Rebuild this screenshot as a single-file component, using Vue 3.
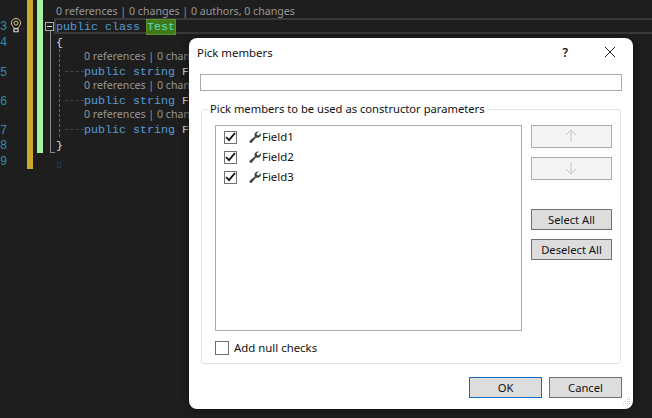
<script setup>
const fields = ['Field1', 'Field2', 'Field3']
const wrench = 'M9 .5C7 .5 5.500 2 5.500 4c0 .5.1 1 .3 1.400L.9 9.500c-.6.6-.6 1.500 0 2 .6.6 1.500.6 2 0L7 6.500c.5.2 1 .3 1.500.3 2 0 3.500-1.500 3.500-3.500 0-.4-.1-.8-.2-1.100L9.500 4.500 8 4 7.500 2.500 9.800.7C9.500.6 9.300.5 9 .5z'
</script>

<template>
  <div class="screen">
    <div class="editor">
      <div class="numbers">
        <span class="n lens"></span>
        <span class="n">3</span>
        <span class="n">4</span>
        <span class="n lens"></span>
        <span class="n short">5</span>
        <span class="n lens"></span>
        <span class="n short">6</span>
        <span class="n lens"></span>
        <span class="n short">7</span>
        <span class="n">8</span>
        <span class="n">9</span>
      </div>
      <div class="bars">
        <div class="bar yellow"></div>
        <div class="bar green"></div>
      </div>
      <div class="code">
        <div class="lens">0 references | 0 changes | 0 authors, 0 changes</div>
        <div class="line current">
          <span class="kw">public class </span><span class="type">Test</span>
        </div>
        <div class="line"><span class="brace">{</span></div>
        <template v-for="f in 3" :key="f">
          <div class="lens inner">0 references | 0 changes</div>
          <div class="line inner"><span class="dots"></span><span class="kw">public string </span><span class="plain">Field</span></div>
        </template>
        <div class="line"><span class="brace">}</span></div>
        <div class="line"><span class="cursor"></span></div>
      </div>
    </div>

    <svg class="bulb" width="12" height="15" viewBox="0 0 14 18" fill="none" stroke="#d8c48a" stroke-width="1.200">
      <path d="M4.500 12.500C4.500 10.500 1.500 9.500 1.500 6a5.500 5.500 0 0 1 11 0c0 3.500-3 4.500-3 6.500z" />
      <circle cx="7" cy="6" r="2.400" />
      <rect x="4.500" y="13" width="5" height="3.500" stroke="#e4e4e4" />
    </svg>
    <div class="fold"></div>
    <div class="fold-line"></div>
    <div class="guide"></div>

    <section class="dialog">
      <header class="title">
        <span class="title-text">Pick members</span>
        <span class="help">?</span>
        <svg class="close" width="12" height="12" viewBox="0 0 12 12" stroke="#222" stroke-width="1" fill="none">
          <path d="M1 1l10 10M11 1L1 11" />
        </svg>
      </header>
      <div class="search"></div>
      <fieldset class="group">
        <legend>Pick members to be used as constructor parameters</legend>
        <div class="picker">
          <ul class="list">
            <li v-for="f in fields" :key="f">
              <span class="check on">
                <svg width="11" height="10" viewBox="0 0 11 10" fill="none" stroke="#111" stroke-width="1.800">
                  <path d="M1 5l3 3.200L10 1" />
                </svg>
              </span>
              <svg class="wrench" width="12" height="12" viewBox="0 0 12 12">
                <path fill="#444" :d="wrench" />
              </svg>
              <span>{{ f }}</span>
            </li>
          </ul>
          <div class="side">
            <button class="btn disabled arrow" aria-label="Move up">
              <svg width="12" height="14" viewBox="0 0 12 14" fill="none" stroke="#c4c4c4">
                <path d="M6 13V1M1 6l5-5 5 5" />
              </svg>
            </button>
            <button class="btn disabled arrow" aria-label="Move down">
              <svg width="12" height="14" viewBox="0 0 12 14" fill="none" stroke="#c4c4c4">
                <path d="M6 1v12M1 8l5 5 5-5" />
              </svg>
            </button>
            <button class="btn select">Select All</button>
            <button class="btn">Deselect All</button>
          </div>
        </div>
        <label class="null">
          <span class="check"></span>
          <span>Add null checks</span>
        </label>
      </fieldset>
      <footer class="actions">
        <button class="btn primary">OK</button>
        <button class="btn">Cancel</button>
      </footer>
      <svg class="grip" width="12" height="12" viewBox="0 0 12 12" fill="#c3c3c3">
        <rect x="9" y="1" width="1" height="1" /><rect x="7" y="3" width="1" height="1" />
        <rect x="9" y="3" width="1" height="1" /><rect x="5" y="5" width="1" height="1" />
        <rect x="7" y="5" width="1" height="1" /><rect x="9" y="5" width="1" height="1" />
        <rect x="3" y="7" width="1" height="1" /><rect x="5" y="7" width="1" height="1" />
        <rect x="7" y="7" width="1" height="1" /><rect x="9" y="7" width="1" height="1" />
      </svg>
    </section>
  </div>
</template>

<style scoped>
.screen {
  position: relative;
  width: 652px;
  height: 418px;
  overflow: hidden;
  background: #1e1e1e;
}
.editor {
  display: flex;
  height: 100%;
}
.numbers {
  width: 8px;
  padding-top: 4px;
  display: flex;
  flex-direction: column;
  color: #2b91af;
  font: 12px/16px "Liberation Mono", monospace;
}
.n { height: 16px; line-height: 16px; }
.n.short { height: 15px; }
.n.lens { height: 14px; }
.n.lens:first-child { height: 15px; }
.bars {
  position: relative;
  width: 48px;
  flex: none;
}
.bar { position: absolute; top: 0; width: 6px; }
.yellow { left: 19px; height: 169px; background: #c9a82c; }
.green { left: 29px; height: 153px; background: #a6f3a6; }
.code {
  padding-top: 4px;
  color: #dcdcdc;
  font: 11.670px/16px "Liberation Mono", monospace;
  white-space: pre;
  flex: 1;
}
.lens {
  height: 15px;
  font: 10.630px/14px "Noto Sans", sans-serif;
  color: #979797;
}
.line { height: 16px; }
.lens.inner {
  box-sizing: border-box;
  width: 133px;
  overflow: hidden;
  height: 14px;
  line-height: 10px;
  padding-left: 28px;
}
.line.inner {
  box-sizing: border-box;
  width: 133px;
  overflow: hidden;
  height: 15px;
  line-height: 15px;
  padding-left: 9px;
}
.dots {
  display: inline-block;
  width: 19px;
  vertical-align: middle;
  border-top: 1px dashed #484848;
}
.current { position: relative; }
.current::before {
  content: "";
  position: absolute;
  top: -1px;
  left: -2px;
  right: 0;
  height: 12px;
  border: 2px solid #3a3a3a;
  border-right: 0;
}
.kw { color: #569cd6; }
.type { color: #5cdcc2; background: #3f7a16; outline: 1px solid #5a8f30; position: relative; }
.plain { color: #dcdcdc; }
.brace { color: #dcdcdc; }
.cursor { display: inline-block; width: 2px; height: 4px; margin: 8px 0 0 1px; border: 1px solid #1d3a4a; }
.bulb { position: absolute; left: 10px; top: 18px; }
.fold {
  position: absolute;
  left: 45px;
  top: 22px;
  width: 9px;
  height: 9px;
  border: 1px solid #aaa;
  background: linear-gradient(#ddd, #ddd) center / 5px 1px no-repeat #1e1e1e;
  box-sizing: border-box;
}
.fold-line {
  position: absolute;
  left: 50px;
  top: 31px;
  width: 4px;
  height: 121px;
  border-left: 1px solid #8a8a8a;
  border-bottom: 1px solid #8a8a8a;
}
.guide {
  position: absolute;
  left: 59px;
  top: 49px;
  height: 88px;
  border-left: 1px dashed #666;
}
.dialog {
  position: absolute;
  left: 189px;
  top: 38px;
  width: 444px;
  height: 371px;
  box-sizing: border-box;
  padding: 0 11px;
  background: #fff;
  border-radius: 8px;
  box-shadow: 0 0 8px #111;
  color: #111;
  font: 11.400px/16px "Noto Sans", sans-serif;
  display: flex;
  flex-direction: column;
}
.title {
  height: 30px;
  flex: none;
  display: flex;
  align-items: center;
}
.title-text { margin-left: -3px; }
.help { margin-left: auto; margin-right: 36px; font-weight: 600; font-size: 12px; }
.close { margin: -2px 6px 0 0; }
.search {
  height: 15px;
  flex: none;
  margin-top: 6px;
  border: 1px solid #ababab;
}
.group {
  margin: 10px 1px 0;
  padding: 0 8px 0 13px;
  border: 1px solid #dce2e8;
  border-radius: 3px;
  height: 263px;
  box-sizing: border-box;
  min-width: 0;
  flex: none;
}
.group legend {
  padding: 0 2px;
  margin-left: -7px;
  font-size: 11.200px;
  line-height: 16px;
}
.picker {
  display: flex;
  justify-content: space-between;
  margin-top: 8px;
}
.list {
  list-style: none;
  margin: 0;
  padding: 1px 0 0 8px;
  width: 307px;
  height: 206px;
  box-sizing: border-box;
  border: 1px solid #ababab;
}
.list li {
  display: flex;
  align-items: center;
  height: 20px;
}
.check {
  width: 14px;
  height: 14px;
  box-sizing: border-box;
  border: 1px solid #707070;
  display: flex;
  align-items: center;
  justify-content: center;
  background: #fff;
  flex: none;
}
.check.on { width: 13px; height: 13px; }
.wrench { margin: 0 1px 0 12px; }
.side {
  width: 81px;
  display: flex;
  flex-direction: column;
  gap: 9px;
}
.btn {
  padding: 0;
  width: 81px;
  height: 21px;
  box-sizing: border-box;
  border: 1px solid #707070;
  background: #dddddd;
  color: #111;
  font: 11.200px/16px "Noto Sans", sans-serif;
  display: flex;
  align-items: center;
  justify-content: center;
}
.arrow { height: 23px; }
.arrow svg { margin: -2px 2px 0 0; }
.disabled { background: #f4f4f4; border-color: #adadad; }
.select { margin-top: 20px; }
.null {
  display: flex;
  align-items: center;
  gap: 5px;
  margin-top: 9px;
}
.actions {
  display: flex;
  justify-content: flex-end;
  gap: 7px;
  margin-top: 13px;
}
.actions .btn { width: 73px; height: 21px; }
.primary { border-color: #0a6fc2; }
.grip { position: absolute; right: 1px; bottom: 1px; }
</style>
